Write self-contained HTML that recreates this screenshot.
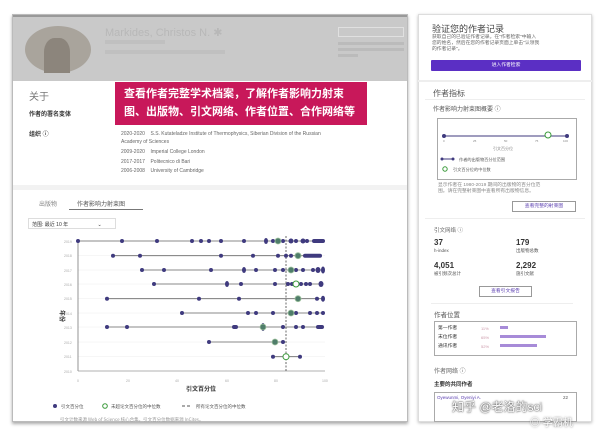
<!DOCTYPE html>
<html><head><meta charset="utf-8"><style>
*{margin:0;padding:0;box-sizing:border-box}
body{width:600px;height:432px;background:#fff;position:relative;overflow:hidden;font-family:"Liberation Sans","Noto Sans CJK SC",sans-serif;color:#333}
.a{position:absolute;white-space:nowrap}
.s{font-size:5px;color:#666}
</style></head><body>
<div class="a" style="left:12px;top:14px;width:396px;height:408px;border:1px solid #bbb;box-shadow:0 2px 3px #aaa;background:#fff"></div>
<div class="a" style="left:13px;top:15px;width:394px;height:66px;background:#c9c9c9"></div>
<div class="a" style="left:13px;top:15px;width:394px;height:2px;background:#999"></div>
<div class="a" style="left:25px;top:26px;width:66px;height:47px;border-radius:50%;background:#a9a49c"></div>
<div class="a" style="left:44px;top:38px;width:26px;height:35px;border-radius:40% 40% 0 0;background:#8c857c"></div>
<div class="a" style="left:105px;top:26px;font-size:11px;color:#b8b8b8">Markides, Christos N. ✱</div>
<div class="a" style="left:105px;top:40px;width:60px;height:4px;background:#c0c0c0"></div>
<div class="a" style="left:105px;top:50px;width:120px;height:4px;background:#c0c0c0"></div>
<div class="a" style="left:338px;top:27px;width:66px;height:10px;border:1px solid #e0e0e0"></div>
<div class="a" style="left:338px;top:42px;width:66px;height:3px;background:#bbb"></div>
<div class="a" style="left:338px;top:48px;width:66px;height:3px;background:#bbb"></div>
<div class="a" style="left:338px;top:54px;width:20px;height:3px;background:#bbb"></div>
<div class="a" style="left:29px;top:88px;font-size:10px;color:#777">关于</div>
<div class="a" style="left:29px;top:109px;font-size:6px;font-weight:bold;color:#333">作者的署名变体</div>
<div class="a" style="left:29px;top:129px;font-size:6px;font-weight:bold;color:#333">组织 ⓘ</div>
<div class="a s" style="left:121px;top:130px;line-height:8px">2020-2020 &nbsp;&nbsp; S.S. Kutateladze Institute of Thermophysics, Siberian Division of the Russian<br>Academy of Sciences</div>
<div class="a s" style="left:121px;top:148px;line-height:9.5px">2009-2020 &nbsp;&nbsp; Imperial College London<br>2017-2017 &nbsp;&nbsp; Politecnico di Bari<br>2006-2008 &nbsp;&nbsp; University of Cambridge</div>
<div class="a" style="left:13px;top:185px;width:394px;height:5px;background:#f2f2f2"></div>
<div class="a" style="left:115px;top:82px;width:252px;height:43px;background:#c8185a;color:#fff;font-size:11px;font-weight:bold;line-height:18px;padding:3px 0 0 9px;overflow:hidden">查看作者完整学术档案，了解作者影响力射束<br>图、出版物、引文网络、作者位置、合作网络等</div>
<div class="a" style="left:39px;top:199px;font-size:6px;color:#888">出版物</div>
<div class="a" style="left:77px;top:199px;font-size:6px;color:#555">作者影响力射束图</div>
<div class="a" style="left:69px;top:209px;width:74px;height:1px;background:#777"></div>
<div class="a" style="left:28px;top:218px;width:88px;height:11px;border:1px solid #ddd;font-size:5px;color:#333;padding:2px 3px">范围: 最近 10 年 <span style="margin-left:28px">⌄</span></div>
<svg class="a" style="left:0;top:0" width="400" height="432">
<g stroke="#eee" stroke-width=".5"><line x1="78" x2="325" y1="241" y2="241"/><line x1="78" x2="325" y1="255.7" y2="255.7"/><line x1="78" x2="325" y1="270" y2="270"/><line x1="78" x2="325" y1="284" y2="284"/><line x1="78" x2="325" y1="298.7" y2="298.7"/><line x1="78" x2="325" y1="313" y2="313"/><line x1="78" x2="325" y1="327" y2="327"/><line x1="78" x2="325" y1="342" y2="342"/><line x1="78" x2="325" y1="356.7" y2="356.7"/></g>
<line x1="78" y1="240" x2="78" y2="371" stroke="#666" stroke-width=".7"/>
<line x1="78" y1="371" x2="325" y2="371" stroke="#999" stroke-width=".7"/>
<g fill="#aaa" font-size="3.5" font-family="Liberation Sans"><text x="64" y="243">2019</text><text x="64" y="257">2018</text><text x="64" y="272">2017</text><text x="64" y="286">2016</text><text x="64" y="300">2015</text><text x="64" y="315">2014</text><text x="64" y="329">2013</text><text x="64" y="344">2012</text><text x="64" y="358">2011</text><text x="64" y="373">2010</text>
<text x="77" y="382">0</text><text x="126" y="382">20</text><text x="175" y="382">40</text><text x="225" y="382">60</text><text x="274" y="382">80</text><text x="322" y="382">100</text></g>
<text x="186" y="391" font-size="6" font-weight="bold" fill="#333" font-family="Noto Sans CJK SC">引文百分位</text>
<text x="60" y="310" font-size="6" font-weight="bold" fill="#333" font-family="Noto Sans CJK SC" transform="rotate(90 60 310)">年份</text>
<g stroke="#666" stroke-width=".8">
<line x1="78" x2="325" y1="241" y2="241"/><line x1="113" x2="322" y1="255.7" y2="255.7"/><line x1="142" x2="323" y1="270" y2="270"/><line x1="154" x2="321" y1="284" y2="284"/><line x1="107" x2="323" y1="298.7" y2="298.7"/><line x1="182" x2="323" y1="313" y2="313"/><line x1="107" x2="323" y1="327" y2="327"/><line x1="209" x2="283" y1="342" y2="342"/><line x1="273" x2="300" y1="356.7" y2="356.7"/></g>
<line x1="286" y1="236" x2="286" y2="372" stroke="#444" stroke-width=".8" stroke-dasharray="2,1.5"/>
<g fill="#3f3a7e">
<g transform="translate(0,241)"><circle cx="78" r="2"/><circle cx="122" r="2"/><circle cx="157" r="2"/><circle cx="192" r="2"/><circle cx="201" r="2"/><circle cx="209" r="2"/><circle cx="221" r="2"/><circle cx="244" r="2"/><ellipse cx="266" rx="2" ry="3"/><circle cx="273" r="2"/><circle cx="283" r="2"/><circle cx="291" r="2.5"/><circle cx="296" r="2"/><circle cx="303" r="2.5"/><circle cx="307" r="2"/><rect x="312" y="-2" width="13" height="4" rx="2"/></g>
<g transform="translate(0,255.7)"><circle cx="113" r="2"/><circle cx="140" r="2"/><circle cx="221" r="2"/><circle cx="253" r="2"/><circle cx="278" r="2"/><circle cx="286" r="2"/><circle cx="291" r="2"/><rect x="303" y="-2" width="19" height="4" rx="2"/></g>
<g transform="translate(0,270)"><circle cx="142" r="2"/><circle cx="164" r="2"/><circle cx="211" r="2"/><ellipse cx="244" rx="2" ry="3"/><circle cx="256" r="2"/><circle cx="275" r="2"/><circle cx="283" r="2"/><circle cx="296" r="2"/><circle cx="303" r="2"/><circle cx="313" r="2"/><ellipse cx="318" rx="2.5" ry="3"/><ellipse cx="323" rx="2" ry="3.5"/></g>
<g transform="translate(0,284)"><circle cx="154" r="2"/><ellipse cx="227" rx="2" ry="3"/><circle cx="241" r="2"/><circle cx="275" r="2"/><circle cx="288" r="2"/><circle cx="292" r="2"/><circle cx="301" r="2"/><circle cx="306" r="2"/><circle cx="310" r="2"/><ellipse cx="321" rx="2.5" ry="3"/></g>
<g transform="translate(0,298.7)"><circle cx="107" r="2"/><circle cx="199" r="2"/><circle cx="239" r="2"/><circle cx="317" r="2"/><ellipse cx="323" rx="2" ry="3"/></g>
<g transform="translate(0,313)"><circle cx="182" r="2"/><circle cx="248" r="2"/><circle cx="256" r="2"/><circle cx="273" r="2"/><circle cx="296" r="2"/><circle cx="310" r="2"/><circle cx="317" r="2"/><circle cx="323" r="2"/></g>
<g transform="translate(0,327)"><circle cx="107" r="2"/><circle cx="127" r="2"/><rect x="232" y="-2" width="6" height="4" rx="2"/><ellipse cx="263" rx="2" ry="4"/><circle cx="283" r="2"/><circle cx="296" r="2"/><circle cx="303" r="2"/><rect x="316" y="-2" width="8" height="4" rx="2"/></g>
<g transform="translate(0,342)"><circle cx="209" r="2"/><circle cx="283" r="2"/></g>
<g transform="translate(0,356.7)"><circle cx="273" r="2"/><circle cx="300" r="2"/></g>
</g>
<g fill="#4f7d6a" stroke="#9fc29f" stroke-width=".8"><circle cx="278" cy="241" r="3"/><circle cx="298" cy="255.7" r="3"/><circle cx="291" cy="270" r="3"/><circle cx="298" cy="298.7" r="3"/><circle cx="291" cy="313" r="3"/><circle cx="263" cy="327" r="3"/><circle cx="275" cy="342" r="3"/></g>
<g fill="#fff" stroke="#3a9a3a" stroke-width="1"><circle cx="296" cy="284" r="3"/><circle cx="286" cy="356.7" r="3"/></g>
<circle cx="55" cy="406" r="2" fill="#3f3a7e"/><text x="61" y="408" font-size="4.5" fill="#555" font-family="Noto Sans CJK SC">引文百分位</text>
<circle cx="105" cy="406" r="2.3" fill="none" stroke="#3a9a3a"/><text x="111" y="408" font-size="4.5" fill="#555" font-family="Noto Sans CJK SC">未超论文百分位的中位数</text>
<line x1="182" y1="406" x2="192" y2="406" stroke="#555" stroke-dasharray="3,2"/><text x="196" y="408" font-size="4.5" fill="#555" font-family="Noto Sans CJK SC">所有论文百分位的中位数</text>
<text x="60" y="421" font-size="4.5" fill="#999" font-family="Noto Sans CJK SC">引文计数来源 Web of Science 核心合集。引文百分位数据来源 InCites。</text>
</svg>
<div class="a" style="left:418px;top:14px;width:174px;height:408px;border:1px solid #ddd;box-shadow:0 1px 3px #bbb;background:#fff"></div>
<div class="a" style="left:432px;top:22px;font-size:9px;color:#444">验证您的作者记录</div>
<div class="a" style="left:432px;top:35px;font-size:4.8px;line-height:6px;color:#666">获取自己的已验证作者记录。在"作者检索"中输入<br>您的姓名，然后在您的作者记录页面上单击"认领我<br>的作者记录"。</div>
<div class="a" style="left:431px;top:60px;width:150px;height:11px;background:#5b2fc4;border-radius:1px;color:#fff;font-size:4.8px;text-align:center;line-height:11px">进入作者检索</div>
<div class="a" style="left:418px;top:80px;width:174px;height:2px;background:#eee"></div>
<div class="a" style="left:433px;top:88px;font-size:8px;color:#555">作者指标</div>
<div class="a" style="left:425px;top:99px;width:160px;height:1px;background:#eee"></div>
<div class="a" style="left:433px;top:104px;font-size:6px;color:#555">作者影响力射束图概要 ⓘ</div>
<div class="a" style="left:437px;top:118px;width:140px;height:62px;border:1px solid #aaa"></div>
<svg class="a" style="left:437px;top:118px" width="140" height="62"><line x1="7" y1="18" x2="130" y2="18" stroke="#3f3a7e" stroke-width="1"/><circle cx="7" cy="18" r="2" fill="#3f3a7e"/><circle cx="130" cy="18" r="2" fill="#3f3a7e"/><circle cx="111" cy="17" r="3" fill="#fff" stroke="#3a9a3a"/><g fill="#888" font-size="3" font-family="Liberation Sans"><text x="6" y="24">0</text><text x="36" y="24">25</text><text x="67" y="24">50</text><text x="98" y="24">75</text><text x="126" y="24">100</text></g><text x="56" y="32" font-size="4" fill="#888" font-family="Noto Sans CJK SC">引文百分位</text><line x1="5" y1="41" x2="16" y2="41" stroke="#3f3a7e"/><circle cx="5" cy="41" r="1.5" fill="#3f3a7e"/><circle cx="16" cy="41" r="1.5" fill="#3f3a7e"/><text x="22" y="43" font-size="4.2" fill="#555" font-family="Noto Sans CJK SC">作者的出版物百分位范围</text><circle cx="8" cy="51" r="2.2" fill="none" stroke="#3a9a3a"/><text x="16" y="53" font-size="4.2" fill="#555" font-family="Noto Sans CJK SC">引文百分位的中位数</text></svg>
<div class="a" style="left:438px;top:183px;font-size:4.8px;line-height:6px;color:#888">显示作者在 1980-2019 期间的出版物的百分位范<br>围。请在完整射束图中查看所有出版物信息。</div>
<div class="a" style="left:512px;top:201px;width:64px;height:11px;border:1px solid #999;font-size:4.8px;color:#5b3fb0;text-align:center;line-height:9px">查看完整的射束图</div>
<div class="a" style="left:425px;top:218px;width:160px;height:1px;background:#eee"></div>
<div class="a" style="left:434px;top:226px;font-size:5.5px;color:#666">引文网络 ⓘ</div>
<div class="a" style="left:434px;top:238px;font-size:8px;font-weight:bold;color:#333">37</div>
<div class="a" style="left:434px;top:248px;font-size:4.5px;color:#555">h-index</div>
<div class="a" style="left:516px;top:238px;font-size:8px;font-weight:bold;color:#333">179</div>
<div class="a" style="left:516px;top:248px;font-size:4.5px;color:#555">出版物总数</div>
<div class="a" style="left:434px;top:261px;font-size:8px;font-weight:bold;color:#333">4,051</div>
<div class="a" style="left:434px;top:271px;font-size:4.5px;color:#555">被引频次总计</div>
<div class="a" style="left:516px;top:261px;font-size:8px;font-weight:bold;color:#333">2,292</div>
<div class="a" style="left:516px;top:271px;font-size:4.5px;color:#555">施引文献</div>
<div class="a" style="left:479px;top:286px;width:53px;height:11px;border:1px solid #999;font-size:4.8px;color:#5b3fb0;text-align:center;line-height:9px">查看引文报告</div>
<div class="a" style="left:431px;top:303px;width:142px;height:1px;background:#eee"></div>
<div class="a" style="left:434px;top:309px;font-size:6.5px;color:#555">作者位置</div>
<div class="a" style="left:434px;top:321px;width:143px;height:35px;border:1px solid #aaa"></div>
<div class="a" style="left:438px;top:324px;font-size:4.8px;line-height:9px;color:#333">第一作者<br>末位作者<br>通讯作者</div>
<div class="a" style="left:481px;top:324px;font-size:4px;line-height:9px;color:#c9a">11%<br>65%<br>52%</div>
<div class="a" style="left:500px;top:326px;width:8px;height:3px;background:#a78bd8"></div>
<div class="a" style="left:500px;top:335px;width:46px;height:3px;background:#a78bd8"></div>
<div class="a" style="left:500px;top:344px;width:37px;height:3px;background:#a78bd8"></div>
<div class="a" style="left:434px;top:366px;font-size:6px;color:#666">作者网络 ⓘ</div>
<div class="a" style="left:434px;top:380px;font-size:5.5px;font-weight:bold;color:#333">主要的共同作者</div>
<div class="a" style="left:434px;top:392px;width:143px;height:30px;border:1px solid #aaa"></div>
<div class="a" style="left:437px;top:395px;font-size:4.5px;color:#5b3fb0">Oyewunmi, Oyeniyi A.</div>
<div class="a" style="left:563px;top:395px;font-size:4.5px;color:#555">22</div>
<div class="a" style="left:452px;top:398px;font-size:12px;color:#fff;text-shadow:0 0 2px #555,0 0 1px #333">知乎 @老洛的sci</div>
<div class="a" style="left:530px;top:414px;font-size:10px;color:#fff;text-shadow:0 0 2px #555">◎ 学霸机</div>
</body></html>
